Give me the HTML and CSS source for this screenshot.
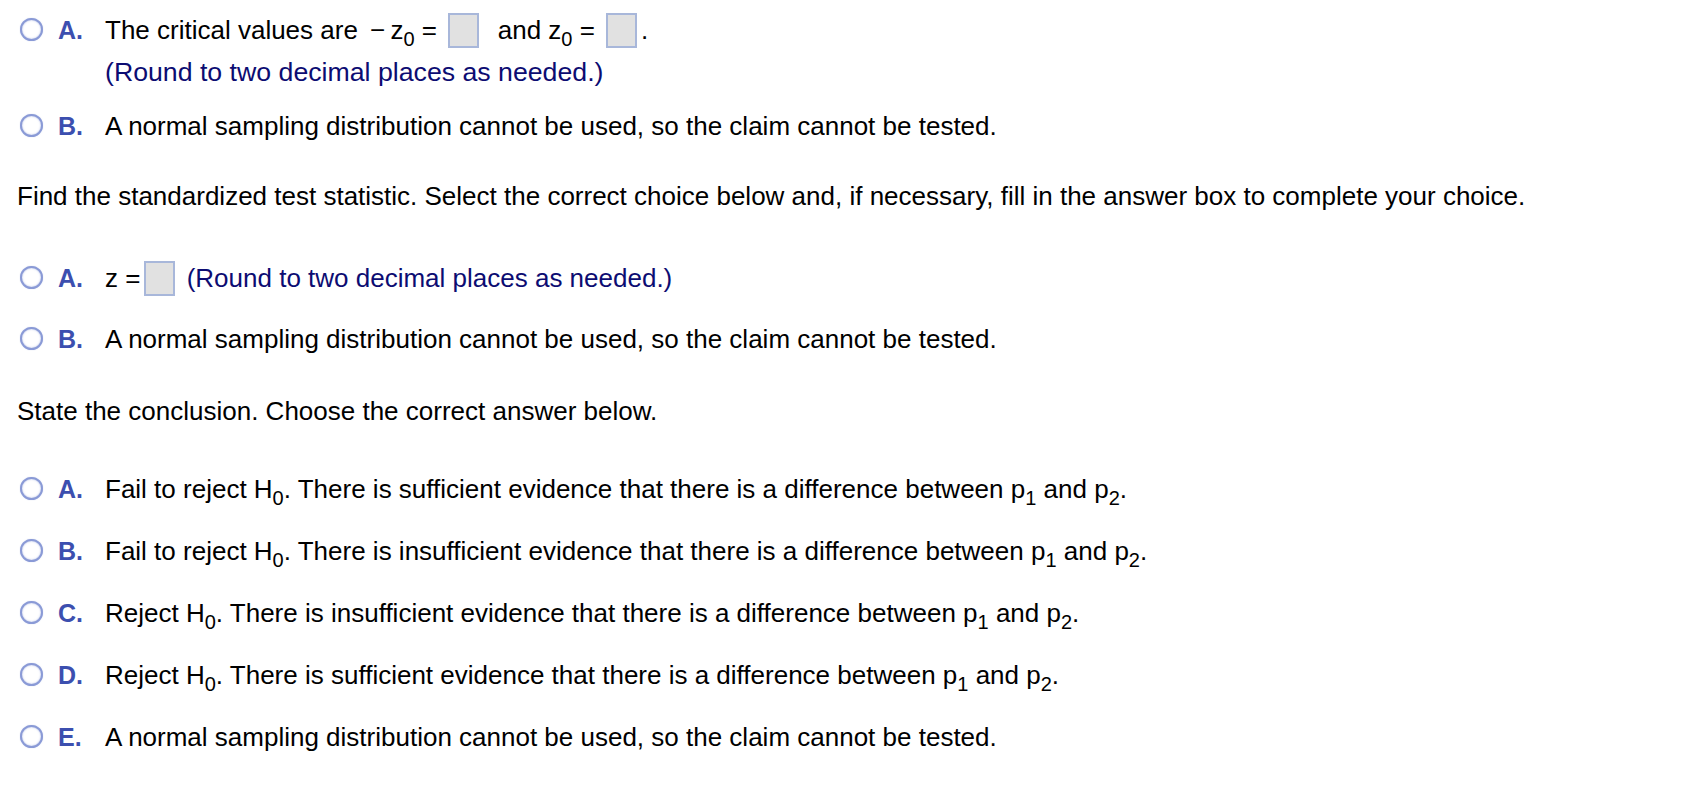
FILE: index.html
```html
<!DOCTYPE html>
<html>
<head>
<meta charset="utf-8">
<link rel="stylesheet" href="styles.css">
</head>
<body>
<div class="page">
  <div class="choice c-first">
    <span class="radio"></span><span class="letter">A.</span>
    <div class="body">
      <div class="line">The critical values are <span class="minus">−</span>&thinsp;z<sub>0</sub> = <span class="box box-wide"></span> &nbsp;and z<sub>0</sub> = <span class="box box-wide"></span>.</div>
      <div class="line note note-below">(Round to two decimal places as needed.)</div>
    </div>
  </div>
  <div class="choice c-b1">
    <span class="radio"></span><span class="letter">B.</span>
    <div class="body"><div class="line">A normal sampling distribution cannot be used, so the claim cannot be tested.</div></div>
  </div>

  <p class="question q-find">Find the standardized test statistic. Select the correct choice below and, if necessary, fill in the answer box to complete your choice.</p>

  <div class="choice c-a2">
    <span class="radio"></span><span class="letter">A.</span>
    <div class="body"><div class="line">z =<span class="box"></span> <span class="note note-inline">(Round to two decimal places as needed.)</span></div></div>
  </div>
  <div class="choice c-b2">
    <span class="radio"></span><span class="letter">B.</span>
    <div class="body"><div class="line">A normal sampling distribution cannot be used, so the claim cannot be tested.</div></div>
  </div>

  <p class="question q-state">State the conclusion. Choose the correct answer below.</p>

  <div class="choice c-list">
    <span class="radio"></span><span class="letter">A.</span>
    <div class="body"><div class="line">Fail to reject H<sub>0</sub>. There is sufficient evidence that there is a difference between p<sub>1</sub> and p<sub>2</sub>.</div></div>
  </div>
  <div class="choice c-list">
    <span class="radio"></span><span class="letter">B.</span>
    <div class="body"><div class="line">Fail to reject H<sub>0</sub>. There is insufficient evidence that there is a difference between p<sub>1</sub> and p<sub>2</sub>.</div></div>
  </div>
  <div class="choice c-list">
    <span class="radio"></span><span class="letter">C.</span>
    <div class="body"><div class="line">Reject H<sub>0</sub>. There is insufficient evidence that there is a difference between p<sub>1</sub> and p<sub>2</sub>.</div></div>
  </div>
  <div class="choice c-list">
    <span class="radio"></span><span class="letter">D.</span>
    <div class="body"><div class="line">Reject H<sub>0</sub>. There is sufficient evidence that there is a difference between p<sub>1</sub> and p<sub>2</sub>.</div></div>
  </div>
  <div class="choice c-list">
    <span class="radio"></span><span class="letter">E.</span>
    <div class="body"><div class="line">A normal sampling distribution cannot be used, so the claim cannot be tested.</div></div>
  </div>
</div>
</body>
</html>
```

FILE: styles.css
```css
html, body {
  margin: 0;
  padding: 0;
  background: #ffffff;
}

.page {
  font-family: "Liberation Sans", Arial, Helvetica, sans-serif;
  font-size: 26px;
  color: #000000;
  padding: 14px 0 0 17px;
}

.choice {
  display: flex;
  align-items: flex-start;
}

.radio {
  flex: none;
  width: 19px;
  height: 19px;
  margin: 4px 15px 0 3px;
  border-radius: 50%;
  border: 2px solid #8a9ad6;
  background: #ffffff;
  box-shadow: inset 0 0 2px rgba(120, 140, 210, 0.6), 0 0 1px rgba(120, 140, 210, 0.5);
}

.letter {
  flex: none;
  width: 47px;
  font-size: 25px;
  font-weight: bold;
  color: #3c4faf;
  line-height: 32px;
}

.body {
  flex: 1;
}

.line {
  line-height: 32px;
  height: 32px;
  white-space: nowrap;
}

.minus {
  margin-left: 5px;
}

.note {
  color: #0c0c72;
  font-size: 26.7px;
}

.note-inline {
  font-size: 26px;
}

.note-below {
  margin-top: 10px;
}

sub {
  font-size: 20px;
  line-height: 0;
  vertical-align: -7px;
}

.box {
  display: inline-block;
  width: 27px;
  height: 31px;
  margin: -4px 4px 0 4px;
  border: 2px solid #a8b7da;
  background: #e1e1e1;
  vertical-align: middle;
}

.box-wide {
  margin-left: 4px;
}

.question {
  margin: 0;
  line-height: 32px;
}

.c-b1 { margin-top: 22px; }
.q-find { margin-top: 38px; }
.c-a2 { margin-top: 50px; }
.c-b2 { margin-top: 29px; }
.q-state { margin-top: 40px; }
.c-list { margin-top: 30px; }
.q-state + .c-list { margin-top: 46px; }
```
